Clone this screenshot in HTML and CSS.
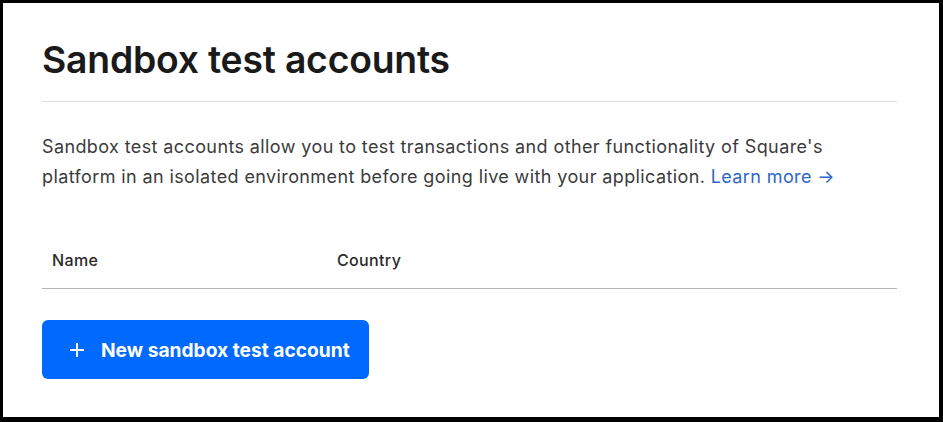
FILE: index.html
```html
<!DOCTYPE html>
<html lang="en">
<head>
<meta charset="utf-8">
<title>Sandbox test accounts</title>
<link rel="stylesheet" href="styles.css">
</head>
<body>
<div class="frame">
  <div class="content">
    <h1 class="title">Sandbox test accounts</h1>
    <p class="intro">Sandbox test accounts allow you to test transactions and other functionality of Square's platform in an isolated environment before going live with your application. <a class="link" href="#">Learn more →</a></p>
    <div class="table-head">
      <div class="col">Name</div>
      <div class="col">Country</div>
    </div>
    <button class="btn" type="button">
      <svg class="plus" width="16" height="16" viewBox="0 0 16 16" aria-hidden="true"><path d="M8 1v14M1 8h14" stroke="#fff" stroke-width="2" fill="none"/></svg>
      <span>New sandbox test account</span>
    </button>
  </div>
</div>
</body>
</html>
```
FILE: styles.css
```css
html, body {
  margin: 0;
  padding: 0;
  background: #fff;
}
.frame {
  box-sizing: border-box;
  width: 943px;
  height: 422px;
  border-style: solid;
  border-color: #000;
  border-width: 3px 4px 5px 3px;
  background: #fff;
  font-family: Inter, "Noto Sans", sans-serif;
}
.content {
  padding: 34px 42px 0 39px;
}
.title {
  margin: 0;
  font-size: 37.3px;
  line-height: 45px;
  font-weight: 600;
  color: #1a1a1a;
  letter-spacing: -0.2px;
  padding-bottom: 19px;
  border-bottom: 1px solid #dcdcdc;
}
.intro {
  margin: 30px 0 0;
  font-size: 18px;
  line-height: 30px;
  letter-spacing: 0.39px;
  color: #3b3b3b;
  max-width: 830px;
}
.link {
  color: #2f66c8;
  text-decoration: none;
  white-space: nowrap;
}
.table-head {
  margin-top: 58px;
  display: grid;
  grid-template-columns: 285px 1fr;
  padding: 0 10px 18px;
  border-bottom: 1px solid #b4b4b4;
  font-size: 16px;
  line-height: 20px;
  letter-spacing: 0.35px;
  font-weight: 500;
  color: #2a2a2a;
}
.btn {
  margin-top: 31px;
  display: inline-flex;
  align-items: center;
  gap: 16px;
  height: 59px;
  padding: 0 19px 0 27px;
  border: none;
  border-radius: 6px;
  background: #006aff;
  color: #fff;
  font-family: Inter, "Noto Sans", sans-serif;
  font-size: 19.2px;
  font-weight: 700;
  cursor: pointer;
}
.plus {
  display: block;
}
```
